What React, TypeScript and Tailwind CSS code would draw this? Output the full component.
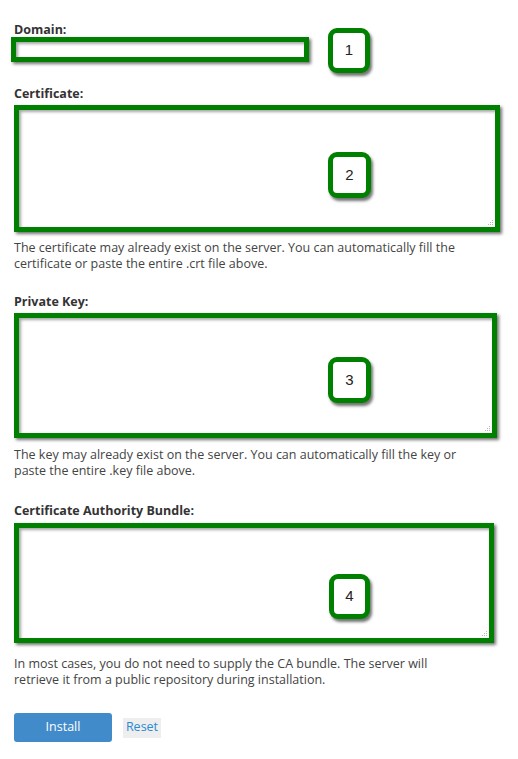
import React from "react";

const frame =
  "relative border-[5px] border-[#008000] bg-white shadow-[2px_2px_3px_rgba(0,0,0,0.55),inset_2px_2px_3px_rgba(0,0,0,0.35)]";

function NumBox({ n, className }: { n: string; className: string }) {
  return (
    <div
      className={`absolute flex items-center justify-center rounded-[9px] border-[5px] border-[#008000] bg-white shadow-[2px_3px_3px_rgba(0,0,0,0.55)] text-[15px] text-[#222] ${className}`}
      style={{ fontFamily: '"Liberation Sans", Arial, sans-serif' }}
    >
      {n}
    </div>
  );
}

function Grip() {
  return (
    <svg className="absolute bottom-[1px] right-[1px]" width="7" height="7" viewBox="0 0 7 7">
      <rect x="5" y="1" width="1" height="1" fill="#b8b8b8" />
      <rect x="3" y="3" width="1" height="1" fill="#b8b8b8" />
      <rect x="5" y="3" width="1" height="1" fill="#b8b8b8" />
      <rect x="1" y="5" width="1" height="1" fill="#b8b8b8" />
      <rect x="3" y="5" width="1" height="1" fill="#b8b8b8" />
      <rect x="5" y="5" width="1" height="1" fill="#b8b8b8" />
    </svg>
  );
}

function Label({ children }: { children: React.ReactNode }) {
  return <div className="h-[16px] font-bold leading-[16px] text-[#333]">{children}</div>;
}

function Help({ children }: { children: React.ReactNode }) {
  return <p className="leading-[16px] text-[#444]">{children}</p>;
}

export default function App() {
  return (
    <div
      className="flex min-h-[759px] w-[518px] flex-col bg-white pl-[14px] pt-[22px] text-[12.5px]"
      style={{ fontFamily: '"Open Sans", "Noto Sans", sans-serif' }}
    >
      <Label>Domain:</Label>
      <div className="relative ml-[-3px] mt-[-1px] h-[25px] w-[298px]">
        <div className={`${frame} h-[25px] w-[298px]`} />
        <NumBox n="1" className="left-[317px] top-[-9px] h-[45px] w-[42px]" />
      </div>

      <div className="mt-[24px] flex flex-col gap-[3px]">
        <Label>Certificate:</Label>
        <div className={`${frame} h-[127px] w-[486px]`}>
          <Grip />
          <NumBox n="2" className="left-[309px] top-[42px] h-[46px] w-[43px]" />
        </div>
      </div>
      <div className="mt-[8px]">
        <Help>
          The certificate may already exist on the server. You can automatically fill the
          <br />
          certificate or paste the entire .crt file above.
        </Help>
      </div>

      <div className="mt-[22px] flex flex-col gap-[3px]">
        <Label>Private Key:</Label>
        <div className={`${frame} h-[125px] w-[483px]`}>
          <Grip />
          <NumBox n="3" className="left-[309px] top-[39px] h-[46px] w-[43px]" />
        </div>
      </div>
      <div className="mt-[9px]">
        <Help>
          The key may already exist on the server. You can automatically fill the key or
          <br />
          paste the entire .key file above.
        </Help>
      </div>

      <div className="mt-[24px] flex flex-col gap-[4px]">
        <Label>Certificate Authority Bundle:</Label>
        <div className={`${frame} h-[120px] w-[480px]`}>
          <Grip />
          <NumBox n="4" className="left-[310px] top-[46px] h-[45px] w-[41px]" />
        </div>
      </div>
      <div className="mt-[13px]">
        <Help>
          In most cases, you do not need to supply the CA bundle. The server will
          <br />
          retrieve it from a public repository during installation.
        </Help>
      </div>

      <div className="mt-[25px] flex items-center gap-[11px]">
        <button className="h-[29px] w-[98px] rounded-[3px] bg-[#428bca] text-[12.5px] text-white">
          Install
        </button>
        <button className="h-[20px] w-[38px] bg-[#eeeeee] text-[12.5px] text-[#2a8ad4]">
          Reset
        </button>
      </div>
    </div>
  );
}
